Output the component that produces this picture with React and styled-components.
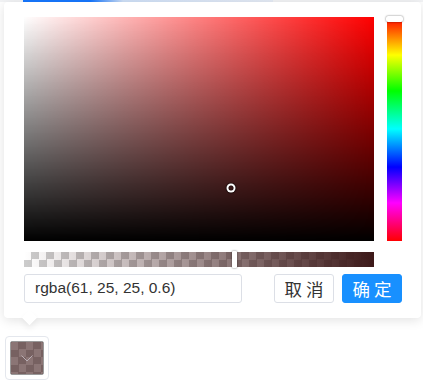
import React from "react";
import styled, { createGlobalStyle } from "styled-components";

const GlobalStyle = createGlobalStyle`
  html, body { margin: 0; padding: 0; background: #fff; }
  body { font-family: "Noto Sans", "Noto Sans CJK SC", sans-serif; }
  * { box-sizing: border-box; }
`;

const Page = styled.div`
  position: relative;
  width: 423px;
  height: 385px;
  overflow: hidden;
  display: flex;
  flex-direction: column;
  background: #fff;
`;

const BgStrip = styled.div`
  height: 2px;
  background: #f2f3f5;
  display: flex;
`;

const BgTab = styled.div`
  margin-left: 23px;
  width: 250px;
  height: 2px;
  background: linear-gradient(to right, #1677ff 0%, #1677ff 27%, #cfe0f7 40%, rgba(220, 230, 245, 0.6) 100%);
`;

const Trigger = styled.div`
  margin: auto 0 5px 5px;
  width: 44px;
  height: 44px;
  padding: 4px;
  border: 1px solid #e4e7ed;
  border-radius: 4px;
  display: flex;
`;

const ColorBox = styled.div`
  position: relative;
  flex: 1;
  border: 1px solid #999;
  border-radius: 2px;
  background-image: conic-gradient(#ccc 25%, #fff 0 50%, #ccc 0 75%, #fff 0);
  background-size: 15px 15px;
  display: flex;
  align-items: center;
  justify-content: center;
  &::before {
    content: "";
    position: absolute;
    inset: 0;
    background: ${(p) => p.$color};
  }
  svg { position: relative; }
`;

const Popup = styled.div`
  position: absolute;
  top: 2px;
  left: 4px;
  width: 417px;
  height: 316px;
  padding: 15px 19px 15px 20px;
  background: #fff;
  border-radius: 4px;
  box-shadow: 0 2px 12px 0 rgba(0, 0, 0, 0.12);
  display: flex;
  flex-direction: column;
`;

const Arrow = styled.div`
  position: absolute;
  left: 20px;
  bottom: -5px;
  width: 11px;
  height: 11px;
  background: #fff;
  transform: rotate(45deg);
  box-shadow: 3px 3px 6px rgba(0, 0, 0, 0.06);
`;

const TopRow = styled.div`
  display: flex;
  gap: 13px;
  height: 225px;
`;

const SVPanel = styled.div`
  position: relative;
  flex: 1;
  background:
    linear-gradient(to top, #000, rgba(0, 0, 0, 0)),
    linear-gradient(to right, #fff, rgba(255, 255, 255, 0)),
    ${(p) => `hsl(${p.$hue}, 100%, 50%)`};
`;

const Cursor = styled.div`
  position: absolute;
  width: 5px;
  height: 5px;
  border-radius: 50%;
  transform: translate(-50%, -50%);
  box-shadow: 0 0 0 2px #fff, inset 0 0 1px 1px rgba(0, 0, 0, 0.3), 0 0 1px 3px rgba(0, 0, 0, 0.45);
`;

const HueBar = styled.div`
  position: relative;
  width: 15px;
  background: linear-gradient(
    to bottom,
    #f00 0%,
    #ff0 17%,
    #0f0 33%,
    #0ff 50%,
    #00f 67%,
    #f0f 83%,
    #f00 100%
  );
`;

const HueThumb = styled.div`
  position: absolute;
  left: -1px;
  right: -1px;
  top: -1px;
  height: 6px;
  background: #fff;
  border-radius: 2px;
  box-shadow: 0 0 2px rgba(0, 0, 0, 0.6);
`;

const AlphaBar = styled.div`
  position: relative;
  margin-top: 11px;
  width: 350px;
  height: 15px;
  background:
    linear-gradient(to right, ${(p) => `rgba(${p.$rgb}, 0)`}, ${(p) => `rgb(${p.$rgb})`}),
    conic-gradient(#ccc 25%, #fff 0 50%, #ccc 0 75%, #fff 0);
  background-size: 100% 100%, 15px 15px;
`;

const AlphaThumb = styled.div`
  position: absolute;
  top: -1px;
  width: 5px;
  height: 17px;
  margin-left: -2px;
  background: #fff;
  border-radius: 1px;
  box-shadow: 0 0 2px rgba(0, 0, 0, 0.6);
`;

const Footer = styled.div`
  margin-top: 7px;
  height: 29px;
  display: flex;
  align-items: stretch;
  gap: 8px;
`;

const Input = styled.div`
  width: 218px;
  margin-right: auto;
  border: 1px solid #dcdfe6;
  border-radius: 3px;
  padding: 0 10px 1px;
  display: flex;
  align-items: center;
  font-family: "Liberation Sans", Arial, sans-serif;
  font-size: 15.5px;
  color: #333;
`;

const Button = styled.div`
  width: 60px;
  border-radius: 3px;
  display: flex;
  align-items: center;
  justify-content: center;
  padding-left: 4px;
  font-size: 17.5px;
  letter-spacing: 4px;
  font-family: "Noto Sans CJK SC", sans-serif;
  border: 1px solid ${(p) => (p.$primary ? "#1890ff" : "#dcdfe6")};
  background: ${(p) => (p.$primary ? "#1890ff" : "#fff")};
  color: ${(p) => (p.$primary ? "#fff" : "#333")};
`;

export default function App() {
  const r = 61, g = 25, b = 25, a = 0.6;
  const max = Math.max(r, g, b);
  const min = Math.min(r, g, b);
  const s = max === 0 ? 0 : (max - min) / max;
  const v = max / 255;
  const rgb = `${r}, ${g}, ${b}`;
  return (
    <Page>
      <GlobalStyle />
      <BgStrip>
        <BgTab />
      </BgStrip>
      <Trigger>
        <ColorBox $color={`rgba(${rgb}, ${a})`}>
          <svg width="16" height="16" viewBox="0 0 16 16">
            <polyline points="2.5,5.5 8,11 13.5,5.5" fill="none" stroke="#b9aeb4" strokeWidth="1" />
          </svg>
        </ColorBox>
      </Trigger>
      <Popup>
        <TopRow>
          <SVPanel $hue={0}>
            <Cursor style={{ left: `${s * 100}%`, top: `${(1 - v) * 100}%` }} />
          </SVPanel>
          <HueBar>
            <HueThumb />
          </HueBar>
        </TopRow>
        <AlphaBar $rgb={rgb}>
          <AlphaThumb style={{ left: `${a * 100}%` }} />
        </AlphaBar>
        <Footer>
          <Input>rgba(61, 25, 25, 0.6)</Input>
          <Button>取消</Button>
          <Button $primary>确定</Button>
        </Footer>
        <Arrow />
      </Popup>
    </Page>
  );
}
